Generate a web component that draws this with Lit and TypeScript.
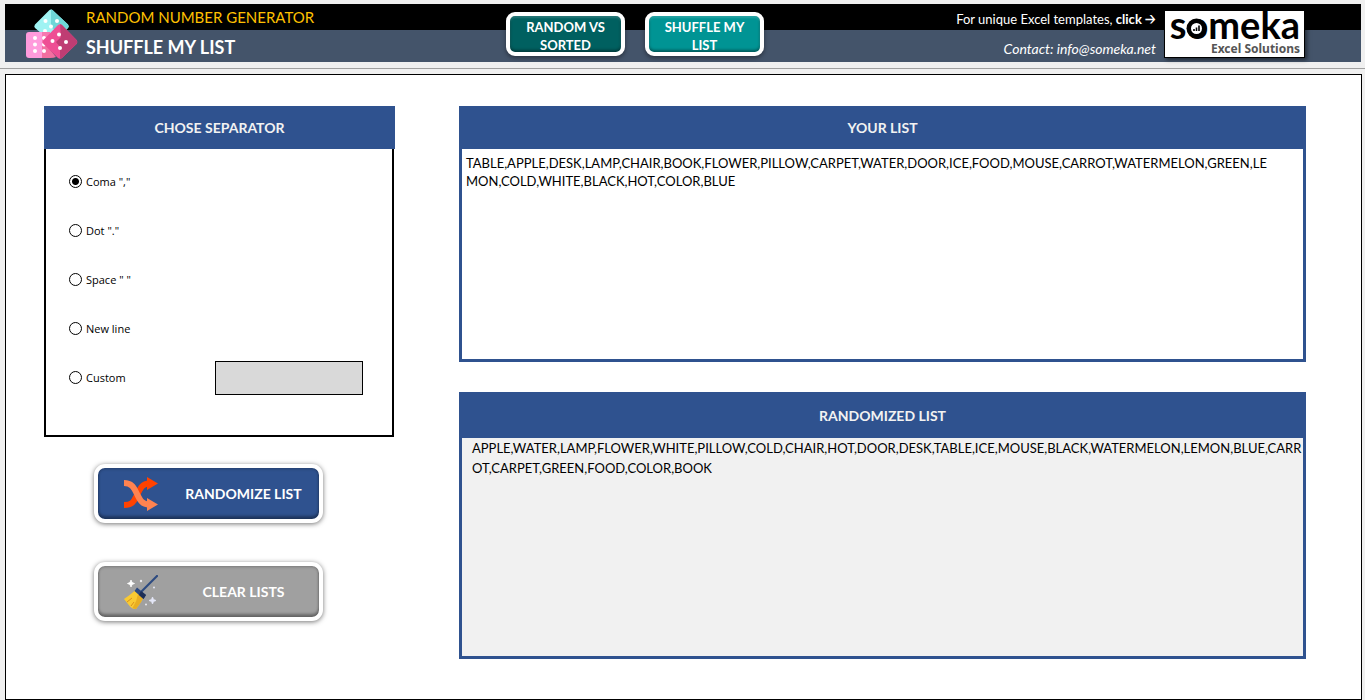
import { LitElement, html, css, svg } from "lit";
import { customElement, state } from "lit/decorators.js";

const SEPARATORS = [
  { id: "comma", label: 'Coma ","' },
  { id: "dot", label: 'Dot "."' },
  { id: "space", label: 'Space " "' },
  { id: "newline", label: "New line" },
  { id: "custom", label: "Custom" },
];

const SOURCE =
  "TABLE,APPLE,DESK,LAMP,CHAIR,BOOK,FLOWER,PILLOW,CARPET,WATER,DOOR,ICE,FOOD,MOUSE,CARROT,WATERMELON,GREEN,LEMON,COLD,WHITE,BLACK,HOT,COLOR,BLUE";
const RESULT =
  "APPLE,WATER,LAMP,FLOWER,WHITE,PILLOW,COLD,CHAIR,HOT,DOOR,DESK,TABLE,ICE,MOUSE,BLACK,WATERMELON,LEMON,BLUE,CARROT,CARPET,GREEN,FOOD,COLOR,BOOK";

const pips = (points: number[][]) =>
  points.map(([x, y]) => svg`<circle cx=${x} cy=${y} r="2" fill="#fff"/>`);

const diceIcon = html`<svg class="dice" viewBox="0 0 52 50" aria-hidden="true">
  <path d="M25 0.5Q26 0.5 27 1.5L42 15.5Q43.5 17.500 42 19L27 34L9 19Q7.500 17.500 9 15.500L23 1.500Q24 .5 25 .5Z" fill="#9ff3f3"/>
  <path d="M25 .5Q26 .5 27 1.5L42 15.5Q43.500 17.500 42 19L34 25L25 18Z" fill="#6fd6d8"/>
  ${pips([[19.500, 12], [31, 12], [25, 17.500], [19, 22]])}
  <path d="M3 23H22V49H3Q0 49 0 46V26Q0 23 3 23Z" fill="#ff9bdc"/>
  <path d="M16 23H24V49H16Z" fill="#f679b0"/>
  <path d="M22 38L30 48Q28 49 24 49H16V34Z" fill="#f26fa0"/>
  ${pips([[9, 29], [9, 35.500], [9, 42], [18, 29], [18, 35.500], [18, 42]])}
  <path d="M32 16Q34 14.500 36 16L50.500 31Q52 33 50.500 35L36 49Q34 50.500 32 49L17.500 35Q16 33 17.500 31Z" fill="#ee4f94"/>
  <path d="M34 15.300Q35 15 36 16L50.500 31Q52 33 50.500 35L36 49Q35 50 34 49.800V38L30 33L35 28Z" fill="#bf3d73"/>
  ${pips([[33, 25.500], [26.500, 32], [40, 33], [34, 39]])}
</svg>`;

const shuffleIcon = html`<svg class="icon" viewBox="0 0 34 34" aria-hidden="true">
  <path d="M0 28C9 28 10 24 13 18C16 12 18 6.500 25 6.500" fill="none" stroke="#ff4200" stroke-width="6"/>
  <path d="M23 0L34 6.500L23 13Z" fill="#ff4200"/>
  <path d="M0 6C8 6 10 11 13 17C16 23 18 27.500 25 27.500" fill="none" stroke="#ff8350" stroke-width="6"/>
  <path d="M23 21L34 27.500L23 34Z" fill="#ff8350"/>
</svg>`;

const broomIcon = html`<svg class="icon" viewBox="0 0 34 34" aria-hidden="true">
  <path d="M18 16L33 1" stroke="#2d4a80" stroke-width="2.200" stroke-linecap="round"/>
  <path d="M11 15.500L19 23L17 27L12 34Q9 34.500 6 31.500L0 24Q5 21 11 15.500Z" fill="#f9ca33"/>
  <path d="M14 19L19 23L17 27L12 34Q10 34 8.500 33Q13 26 14 19Z" fill="#e8ae22"/>
  <path d="M3 27L8 23M7 31L10 27" stroke="#d9901d" stroke-width="1"/>
  <path d="M13 12.500L22 20L19.500 24L10.500 16Z" fill="#2d4a80"/>
  <path d="M17 16L22 20L19.500 24L15 20Z" fill="#1e2f57"/>
  <path d="M7 5L8 7.500L10.500 8.500L8 9.500L7 12L6 9.500L3.500 8.500L6 7.500Z" fill="#fff" stroke="#fff" stroke-width=".8"/>
  <path d="M28.500 22L29.500 24.500L32 25.500L29.500 26.500L28.500 29L27.500 26.500L25 25.500L27.500 24.500Z" fill="#e3e6f6" stroke="#e3e6f6" stroke-width=".8"/>
  <circle cx="17" cy="6" r="1.200" fill="#e8e8ee"/>
  <circle cx="30" cy="12.500" r="1" fill="#e3e6f6"/>
  <circle cx="22" cy="29.500" r="1" fill="#e8e8ee"/>
</svg>`;

@customElement("app-root")
export class AppRoot extends LitElement {
  @state() private separator = "comma";
  @state() private source = SOURCE;
  @state() private result = RESULT;

  static styles = css`
    :host {
      display: flex;
      flex-direction: column;
      min-height: 100vh;
      box-sizing: border-box;
      background: #f0f0f0;
      color: #000;
      font-family: Lato, "Liberation Sans", sans-serif;
      font-size: 13px;
    }
    * {
      box-sizing: border-box;
    }
    .top {
      padding: 4px 4px 6px 5px;
      border-bottom: 1px solid #a0a0a0;
    }
    .bar {
      display: flex;
      align-items: center;
      height: 58px;
      padding: 2px 56px 0 21px;
      background: linear-gradient(#000 26px, #44546a 26px);
      color: #fff;
    }
    .dice {
      width: 52px;
      height: 50px;
      flex: none;
    }
    .titles {
      width: 428px;
      padding-left: 8px;
    }
    .product,
    .title {
      margin: 0;
      font-size: 15px;
      font-weight: 400;
      line-height: 26px;
      color: #ffc000;
    }
    .title {
      font-size: 18px;
      font-weight: 700;
      line-height: 34px;
      color: #fff;
    }
    .tabs {
      display: flex;
      gap: 20px;
    }
    .tab {
      width: 119px;
      height: 44px;
      padding: 2px 12px 0;
      border: 4px solid #fff;
      border-radius: 9px;
      background: #006060;
      color: #fff;
      font: 700 13px/18px Lato, sans-serif;
      box-shadow: 0 2px 4px rgba(0, 0, 0, 0.4),
        inset 0 2px 2px rgba(255, 255, 255, 0.15),
        inset 0 -2px 3px rgba(0, 0, 0, 0.4);
    }
    .tab.current {
      background: #009494;
    }
    .contact {
      margin-left: auto;
      padding-right: 8px;
      text-align: right;
      line-height: 29px;
    }
    .contact a {
      display: block;
      color: #fff;
      text-decoration: none;
    }
    .contact .mail {
      font-size: 14px;
      font-style: italic;
    }
    .logo {
      position: relative;
      width: 141px;
      height: 48px;
      padding-right: 4px;
      border: 1px solid #000;
      background: #fff;
      color: #000;
      text-align: right;
      text-decoration: none;
      box-shadow: 2px 2px 4px rgba(0, 0, 0, 0.5);
    }
    .brand {
      display: block;
      font: 700 38px/26px Lato, sans-serif;
    }
    .tagline {
      display: block;
      color: #555;
      font: 700 12px/24px "Noto Sans", sans-serif;
    }
    .chart {
      position: absolute;
      left: 21px;
      top: 7px;
      width: 21px;
      height: 21px;
    }
    .sheet {
      flex: 1;
      display: grid;
      grid-template-columns: 351px minmax(0, 1fr);
      align-items: start;
      gap: 64px;
      margin: 5px 3px 0 5px;
      padding: 31px 55px 40px 38px;
      border: 1px solid #000;
      background: #fff;
    }
    .heading {
      margin: 0;
      height: 43px;
      background: #2f528f;
      color: #f2f2f2;
      font-size: 14px;
      font-weight: 700;
      line-height: 44px;
      text-align: center;
    }
    .options {
      margin: 0 1px 0 0;
      padding: 8px 29px 33px 23px;
      border: 2px solid #000;
      border-top: 0;
    }
    .option {
      display: flex;
      align-items: center;
      height: 49px;
      font: 11px/16px "Open Sans", sans-serif;
    }
    .option label {
      display: flex;
      align-items: center;
      gap: 4px;
    }
    .radio {
      appearance: none;
      width: 13px;
      height: 13px;
      margin: 0;
      border: 1px solid #000;
      border-radius: 50%;
      background: #fff;
    }
    .radio:checked {
      background: radial-gradient(circle, #000 3px, #fff 4px);
    }
    .custom {
      width: 148px;
      height: 34px;
      margin-left: auto;
      padding: 0 6px;
      border: 1px solid #000;
      border-radius: 0;
      background: #d9d9d9;
    }
    .actions {
      display: grid;
      gap: 39px;
      width: 229px;
      margin: 27px 0 0 50px;
    }
    .action {
      display: flex;
      align-items: center;
      height: 59px;
      padding: 0 16px 0 26px;
      border: 4px solid #fff;
      border-radius: 11px;
      background: #2f528f;
      color: #fff;
      font: 700 14px/18px Lato, sans-serif;
      box-shadow: 0 1px 5px rgba(0, 0, 0, 0.55),
        inset 0 1px 3px rgba(0, 0, 0, 0.25),
        inset 0 -3px 3px rgba(0, 0, 0, 0.35);
    }
    .action.clear {
      background: #a0a0a0;
    }
    .action span {
      flex: 1;
      padding-left: 26px;
      text-align: center;
      white-space: nowrap;
    }
    .icon {
      width: 34px;
      height: 34px;
      flex: none;
    }
    .lists {
      display: grid;
      gap: 30px;
    }
    .list {
      background: #2f528f;
    }
    .text {
      display: block;
      width: 100%;
      height: 213px;
      margin: 0;
      padding: 5px 32px 5px 4px;
      border: 3px solid #2f528f;
      border-top: 0;
      border-radius: 0;
      outline: 0;
      resize: none;
      background: #fff;
      color: #000;
      font: 13px/18px Lato, sans-serif;
      word-break: break-all;
    }
    .result .heading {
      height: 46px;
      line-height: 48px;
    }
    .result .text {
      height: 221px;
      padding: 0 0 0 10px;
      background: #f1f1f1;
      line-height: 20px;
    }
  `;

  private get glue() {
    const custom = this.renderRoot.querySelector<HTMLInputElement>(".custom");
    const map: Record<string, string> = {
      comma: ",",
      dot: ".",
      space: " ",
      newline: "\n",
      custom: custom?.value || ",",
    };
    return map[this.separator];
  }

  private randomize() {
    const items = this.source.split(this.glue).filter(Boolean);
    for (let i = items.length - 1; i > 0; i--) {
      const j = Math.floor(Math.random() * (i + 1));
      [items[i], items[j]] = [items[j], items[i]];
    }
    this.result = items.join(this.glue);
  }

  private clear() {
    this.source = "";
    this.result = "";
  }

  render() {
    return html`
      <header class="top">
        <div class="bar">
          ${diceIcon}
          <div class="titles">
            <p class="product">RANDOM NUMBER GENERATOR</p>
            <h1 class="title">SHUFFLE MY LIST</h1>
          </div>
          <nav class="tabs">
            <button class="tab">RANDOM VS SORTED</button>
            <button class="tab current">SHUFFLE MY LIST</button>
          </nav>
          <div class="contact">
            <a href="#templates">For unique Excel templates, <b>click 🡢</b></a>
            <a class="mail" href="mailto:info@someka.net">Contact: info@someka.net</a>
          </div>
          <a class="logo" href="#home">
            <span class="brand">someka</span>
            <span class="tagline">Excel Solutions</span>
            <svg class="chart" viewBox="0 0 21 21" aria-hidden="true">
              <circle cx="10.500" cy="10.500" r="10" fill="#000"/>
              <circle cx="10.500" cy="10.500" r="5.500" fill="#fff"/>
              <path d="M8 13V11M10.500 13V9.500M13 13V7.500" stroke="#000" stroke-width="1.600"/>
            </svg>
          </a>
        </div>
      </header>
      <main class="sheet">
        <div>
          <h2 class="heading">CHOSE SEPARATOR</h2>
          <div class="options" role="radiogroup" aria-label="Separator">
            ${SEPARATORS.map(
              (s) => html`<div class="option">
                <label>
                  <input class="radio" type="radio" name="separator"
                    .checked=${this.separator === s.id}
                    @change=${() => (this.separator = s.id)} />
                  ${s.label}
                </label>
                ${s.id === "custom"
                  ? html`<input class="custom" type="text" aria-label="Custom separator" />`
                  : ""}
              </div>`
            )}
          </div>
          <div class="actions">
            <button class="action" @click=${this.randomize}>
              ${shuffleIcon}<span>RANDOMIZE LIST</span>
            </button>
            <button class="action clear" @click=${this.clear}>
              ${broomIcon}<span>CLEAR LISTS</span>
            </button>
          </div>
        </div>
        <div class="lists">
          <section class="list">
            <h2 class="heading"><label for="source">YOUR LIST</label></h2>
            <textarea class="text" id="source" spellcheck="false" .value=${this.source}
              @input=${(e: Event) => (this.source = (e.target as HTMLTextAreaElement).value)}></textarea>
          </section>
          <section class="list result">
            <h2 class="heading"><label for="result">RANDOMIZED LIST</label></h2>
            <textarea class="text" id="result" readonly spellcheck="false" .value=${this.result}></textarea>
          </section>
        </div>
      </main>
    `;
  }
}
